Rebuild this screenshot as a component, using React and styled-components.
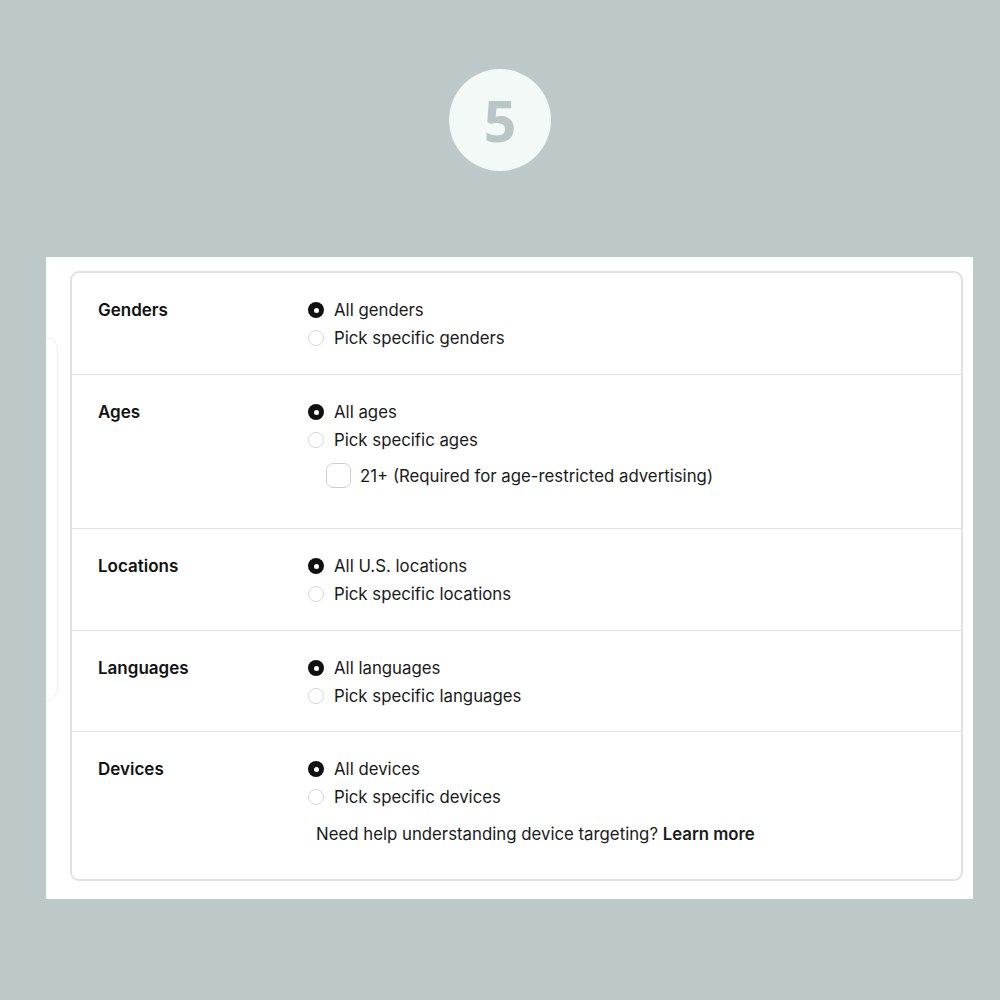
import React from 'react'
import styled, { createGlobalStyle } from 'styled-components';

const Global = createGlobalStyle`
  html, body {
    margin: 0;
    padding: 0;
    background: #bcc9c8;
  }
  body {
    font-family: Inter, "Liberation Sans", Arial, sans-serif;
    color: #111;
  }
`;

const Page = styled.div`
  width: 1000px;
  height: 1000px;
  display: flex;
  flex-flow: column;
  align-items: center;
`;

const StepBadge = styled.div`
  margin-top: 69px;
  width: 102px;
  height: 102px;
  border-radius: 50%;
  background: #f3f9f6;
  display: flex;
  align-items: center;
  justify-content: center;
  font-family: "Open Sans", sans-serif;
  font-weight: 700;
  font-size: 57px;
  color: #b9c6c5;
  line-height: 1;
`;

const Panel = styled.div`
  position: relative;
  overflow: hidden;
  margin-top: 86px;
  margin-left: 19px;
  width: 927px;
  height: 642px;
  background: #fff;
  box-sizing: border-box;
  padding: 14px 10px 0 24px;
`;

const GhostCard = styled.div`
  position: absolute;
  left: -12px;
  top: 80px;
  width: 22px;
  height: 362px;
  border: 1px solid #eeeeee;
  border-radius: 12px;
`;

const Card = styled.div`
  position: relative;
  border: 2px solid #e1e1e1;
  border-radius: 9px;
  background: #fff;
`;

const Row = styled.div`
  display: flex;
  box-sizing: border-box;
  height: ${props => props.h}px;
  padding: 23px 0 0 26px;
  border-top: ${props => props.first ? 'none' : '1px solid #e3e3e3'};
`;

const Label = styled.div`
  width: 210px;
  height: 28px;
  display: flex;
  align-items: center;
  font-weight: 600;
  font-size: 17px;
`;

const Options = styled.div`
  display: flex;
  flex-flow: column;
`;

const Option = styled.label`
  display: flex;
  align-items: center;
  height: 28px;
  font-size: 16.8px;
  color: #1a1a1a;
`;

const Radio = styled.span`
  width: 16px;
  height: 16px;
  box-sizing: border-box;
  border-radius: 50%;
  margin-right: 10px;
  display: flex;
  align-items: center;
  justify-content: center;
  background: ${props => props.on ? '#111' : '#fff'};
  border: ${props => props.on ? 'none' : '1px solid #d8d8d8'};

  &::after {
    content: '';
    display: ${props => props.on ? 'block' : 'none'};
    width: 5px;
    height: 5px;
    border-radius: 50%;
    background: #fff;
  }
`;

const CheckRow = styled.label`
  display: flex;
  align-items: center;
  margin: 9px 0 0 18px;
  font-size: 16.8px;
  color: #1a1a1a;
`;

const Check = styled.span`
  width: 25px;
  height: 25px;
  box-sizing: border-box;
  border: 1px solid #cfcfcf;
  border-radius: 7px;
  margin-right: 9px;
`;

const Help = styled.p`
  margin: 11px 0 0 8px;
  font-size: 16.8px;
  line-height: 24px;
  color: #1a1a1a;

  b {
    font-weight: 600;
  }
`;

const sections = [
  { label: 'Genders', all: 'All genders', pick: 'Pick specific genders', h: 101 },
  { label: 'Ages', all: 'All ages', pick: 'Pick specific ages', h: 154, extra: 'check' },
  { label: 'Locations', all: 'All U.S. locations', pick: 'Pick specific locations', h: 102 },
  { label: 'Languages', all: 'All languages', pick: 'Pick specific languages', h: 101 },
  { label: 'Devices', all: 'All devices', pick: 'Pick specific devices', h: 148, extra: 'help' },
];

export default function App() {
  return (
    <Page>
      <Global />
      <StepBadge>5</StepBadge>
      <Panel>
        <GhostCard />
        <Card>
          {sections.map((s, i) => (
            <Row key={s.label} h={s.h} first={i === 0}>
              <Label>{s.label}</Label>
              <Options>
                <Option><Radio on />{s.all}</Option>
                <Option><Radio />{s.pick}</Option>
                {s.extra === 'check' && (
                  <CheckRow><Check />21+ (Required for age-restricted advertising)</CheckRow>
                )}
                {s.extra === 'help' && (
                  <Help>Need help understanding device targeting? <b>Learn more</b></Help>
                )}
              </Options>
            </Row>
          ))}
        </Card>
      </Panel>
    </Page>
  )
}
